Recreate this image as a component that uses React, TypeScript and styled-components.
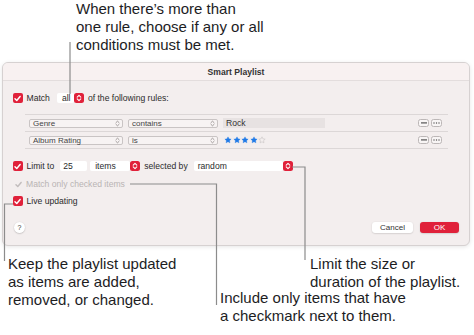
import React from "react";
import styled, { createGlobalStyle } from "styled-components";

const RED = "#e0213a";

const GlobalStyle = createGlobalStyle`
  html, body {
    margin: 0;
    padding: 0;
    background: #ffffff;
  }
  body {
    font-family: "Liberation Sans", Arial, sans-serif;
    color: #1d1d1f;
  }
  * {
    box-sizing: border-box;
  }
`;

const Page = styled.div`
  position: relative;
  width: 474px;
  height: 335px;
  overflow: hidden;
`;

const Caption = styled.div`
  font-size: 15px;
  line-height: 18px;
  color: #1d1d1f;
  white-space: nowrap;
`;

const TopCaption = styled(Caption)`
  margin-left: 76px;
  height: 54px;
  margin-bottom: 8px;
`;

const Window = styled.div`
  margin-left: 2px;
  width: 468px;
  height: 184px;
  border: 1px solid #d6d1d1;
  border-radius: 6px;
  background: #f3eeee;
  box-shadow: 0 1px 4px rgba(0, 0, 0, 0.1);
  display: flex;
  flex-direction: column;
  overflow: hidden;
  font-size: 8.6px;
  color: #2b2b2b;
`;

const TitleBar = styled.div`
  flex: none;
  height: 18px;
  background: #f8f1f1;
  border-bottom: 1px solid #e3dddd;
  display: flex;
  align-items: center;
  justify-content: center;
  font-weight: bold;
  color: #333;
`;

const Content = styled.div`
  flex: 1;
  display: flex;
  flex-direction: column;
  padding: 12px 10px 0 10px;
`;

const Row = styled.div<{ $top?: number }>`
  display: flex;
  align-items: center;
  height: 10px;
  margin-top: ${(p) => p.$top ?? 0}px;
`;

const Label = styled.span<{ $ml?: number; $muted?: boolean }>`
  margin-left: ${(p) => p.$ml ?? 0}px;
  color: ${(p) => (p.$muted ? "#b9b4b4" : "#2b2b2b")};
  white-space: nowrap;
`;

const Box = styled.div`
  width: 9.5px;
  height: 9.5px;
  border-radius: 2px;
  background: ${RED};
  display: flex;
  align-items: center;
  justify-content: center;
  flex: none;
`;

const GhostCheck = styled.div`
  width: 9px;
  height: 9px;
  margin-left: 1px;
  display: flex;
  align-items: center;
  justify-content: center;
  flex: none;
`;

const Field = styled.div<{ $w: number; $ml?: number; $pl?: number }>`
  width: ${(p) => p.$w}px;
  height: 10px;
  margin-left: ${(p) => p.$ml ?? 0}px;
  padding-left: ${(p) => p.$pl ?? 5}px;
  background: #ffffff;
  border-radius: 2px;
  display: flex;
  align-items: center;
  flex: none;
`;

const Stepper = styled.div`
  width: 10px;
  height: 10px;
  border-radius: 2.5px;
  background: ${RED};
  display: flex;
  align-items: center;
  justify-content: center;
  flex: none;
`;

const Rules = styled.div`
  margin-top: 11px;
  margin-left: 12px;
  width: 423px;
  border-top: 1px solid #dcd7d7;
`;

const RuleRow = styled.div`
  height: 17px;
  border-bottom: 1px solid #dcd7d7;
  display: flex;
  align-items: center;
  padding: 0 6px 0 4px;
`;

const RulePopup = styled.div<{ $w: number; $ml?: number }>`
  width: ${(p) => p.$w}px;
  height: 9px;
  margin-left: ${(p) => p.$ml ?? 0}px;
  border: 1px solid #c9c4c4;
  border-radius: 2px;
  background: #f7f3f3;
  display: flex;
  align-items: center;
  justify-content: space-between;
  padding: 0 2px 0 3px;
  font-size: 8px;
  color: #444;
  flex: none;
`;

const TextInput = styled.div`
  width: 102px;
  height: 10px;
  margin-left: 5px;
  padding-left: 3px;
  background: #e7e2e2;
  display: flex;
  align-items: center;
  color: #333;
`;

const Stars = styled.div`
  margin-left: 6px;
  display: flex;
  gap: 0.5px;
`;

const SmallButton = styled.div<{ $ml?: number }>`
  width: 11px;
  height: 8px;
  margin-left: ${(p) => p.$ml ?? 0}px;
  border: 1px solid #bcb7b7;
  border-radius: 2.5px;
  background: #f8f5f5;
  display: flex;
  align-items: center;
  justify-content: center;
  flex: none;
`;

const Spacer = styled.div`
  flex: 1;
`;

const Footer = styled.div`
  margin-top: 16px;
  height: 11px;
  display: flex;
  align-items: center;
`;

const Help = styled.div`
  width: 11px;
  height: 11px;
  margin-left: 1px;
  border-radius: 50%;
  background: #ffffff;
  box-shadow: 0 0.5px 1.5px rgba(0, 0, 0, 0.28);
  display: flex;
  align-items: center;
  justify-content: center;
  font-size: 7px;
  color: #333;
`;

const Button = styled.div<{ $w: number; $primary?: boolean; $ml?: number }>`
  width: ${(p) => p.$w}px;
  height: 11px;
  margin-left: ${(p) => p.$ml ?? 0}px;
  border-radius: 3px;
  background: ${(p) => (p.$primary ? RED : "#ffffff")};
  color: ${(p) => (p.$primary ? "#ffffff" : "#333")};
  box-shadow: 0 0.5px 1.5px rgba(0, 0, 0, 0.2);
  display: flex;
  align-items: center;
  justify-content: center;
  font-size: 8px;
`;

const Notes = styled.div`
  display: grid;
  grid-template-columns: 8px 212px 90px 1fr;
  grid-template-rows: 34px auto;
  margin-top: 9px;
`;

const Note = styled(Caption)<{ $col: string; $row: string }>`
  grid-column: ${(p) => p.$col};
  grid-row: ${(p) => p.$row};
`;

const Leaders = styled.svg`
  position: absolute;
  left: 0;
  top: 0;
  pointer-events: none;
`;

function Check({ color = "#fff" }: { color?: string }) {
  return (
    <svg width="9" height="9" viewBox="0 0 10 10">
      <path
        d="M2.2 5.2 L4.2 7.2 L7.9 2.7"
        fill="none"
        stroke={color}
        strokeWidth="1.6"
        strokeLinecap="round"
        strokeLinejoin="round"
      />
    </svg>
  );
}

function Checkbox() {
  return (
    <Box>
      <Check />
    </Box>
  );
}

function StepperIcon() {
  return (
    <Stepper>
      <svg width="10" height="10" viewBox="0 0 10 10">
        <path
          d="M3.2 4.1 L5 2.4 L6.8 4.1 M3.2 5.9 L5 7.6 L6.8 5.9"
          fill="none"
          stroke="#fff"
          strokeWidth="1.1"
          strokeLinecap="round"
          strokeLinejoin="round"
        />
      </svg>
    </Stepper>
  );
}

function Chevrons() {
  return (
    <svg width="5" height="7" viewBox="0 0 5 7">
      <path
        d="M1 2.6 L2.5 1.2 L4 2.6 M1 4.4 L2.5 5.8 L4 4.4"
        fill="none"
        stroke="#8a8585"
        strokeWidth="0.8"
        strokeLinecap="round"
        strokeLinejoin="round"
      />
    </svg>
  );
}

const STAR =
  "M12 2.5l2.9 6.1 6.6.8-4.9 4.6 1.3 6.6L12 17.3l-5.9 3.3 1.3-6.6L2.5 9.4l6.6-.8z";

function Star({ filled }: { filled: boolean }) {
  return (
    <svg width="8" height="8" viewBox="0 0 24 24">
      <path
        d={STAR}
        fill={filled ? "#1f7ae8" : "none"}
        stroke={filled ? "#1f7ae8" : "#c4c0c0"}
        strokeWidth={filled ? 1 : 1.6}
        strokeLinejoin="round"
      />
    </svg>
  );
}

function RowButtons() {
  return (
    <>
      <Spacer />
      <SmallButton>
        <svg width="6" height="2" viewBox="0 0 6 2">
          <rect x="0" y="0.3" width="6" height="1.2" fill="#555" />
        </svg>
      </SmallButton>
      <SmallButton $ml={2}>
        <svg width="7" height="2" viewBox="0 0 7 2">
          <circle cx="1" cy="1" r="0.7" fill="#555" />
          <circle cx="3.5" cy="1" r="0.7" fill="#555" />
          <circle cx="6" cy="1" r="0.7" fill="#555" />
        </svg>
      </SmallButton>
    </>
  );
}

export default function App() {
  return (
    <Page>
      <GlobalStyle />
      <TopCaption>
        When there’s more than
        <br />
        one rule, choose if any or all
        <br />
        conditions must be met.
      </TopCaption>

      <Window>
        <TitleBar>Smart Playlist</TitleBar>
        <Content>
          <Row>
            <Checkbox />
            <Label $ml={4}>Match</Label>
            <Field $w={17} $ml={7}>all</Field>
            <StepperIcon />
            <Label $ml={4}>of the following rules:</Label>
          </Row>

          <Rules>
            <RuleRow>
              <RulePopup $w={94}>
                Genre
                <Chevrons />
              </RulePopup>
              <RulePopup $w={90} $ml={5}>
                contains
                <Chevrons />
              </RulePopup>
              <TextInput>Rock</TextInput>
              <RowButtons />
            </RuleRow>
            <RuleRow>
              <RulePopup $w={94}>
                Album Rating
                <Chevrons />
              </RulePopup>
              <RulePopup $w={90} $ml={5}>
                is
                <Chevrons />
              </RulePopup>
              <Stars>
                {[1, 2, 3, 4, 5].map((n) => (
                  <Star key={n} filled={n <= 4} />
                ))}
              </Stars>
              <RowButtons />
            </RuleRow>
          </Rules>

          <Row $top={12}>
            <Checkbox />
            <Label $ml={4}>Limit to</Label>
            <Field $w={27} $ml={6} $pl={3}>
              25
            </Field>
            <Field $w={40} $ml={3}>
              items
            </Field>
            <StepperIcon />
            <Label $ml={4}>selected by</Label>
            <Field $w={89} $ml={6} $pl={4}>
              random
            </Field>
            <StepperIcon />
          </Row>

          <Row $top={8}>
            <GhostCheck>
              <Check color="#c2bdbd" />
            </GhostCheck>
            <Label $ml={3} $muted>
              Match only checked items
            </Label>
          </Row>

          <Row $top={7}>
            <Checkbox />
            <Label $ml={4}>Live updating</Label>
          </Row>

          <Footer>
            <Help>?</Help>
            <Spacer />
            <Button $w={41}>Cancel</Button>
            <Button $w={39} $ml={7} $primary>
              OK
            </Button>
          </Footer>
        </Content>
      </Window>

      <Notes>
        <Note $col="2" $row="1 / span 2">
          Keep the playlist updated
          <br />
          as items are added,
          <br />
          removed, or changed.
        </Note>
        <Note $col="4" $row="1">
          Limit the size or
          <br />
          duration of the playlist.
        </Note>
        <Note $col="3 / span 2" $row="2">
          Include only items that have
          <br />
          a checkmark next to them.
        </Note>
      </Notes>

      <Leaders width="474" height="335" viewBox="0 0 474 335">
        <g fill="none" stroke="#8c8c8c" strokeWidth="1.2">
          <path d="M70 42 V94" />
          <path d="M292 167 H305 V260" />
          <path d="M130 184 H216.5 V305" />
          <path d="M13 204 H4.5 V261" />
        </g>
      </Leaders>
    </Page>
  );
}
